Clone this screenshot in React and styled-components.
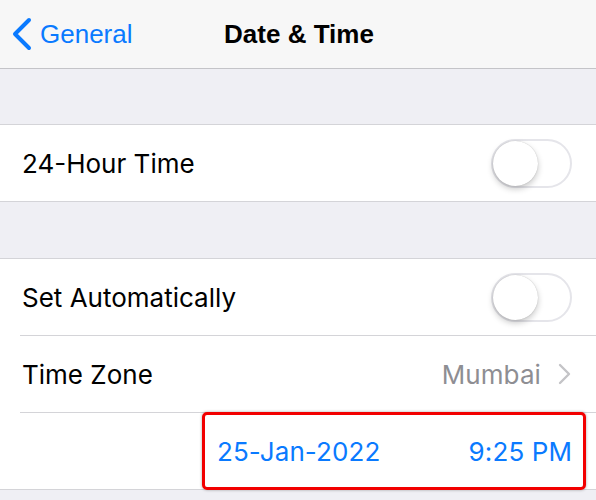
import React from "react";
import styled, { createGlobalStyle } from "styled-components";

const GlobalStyle = createGlobalStyle`
  body {
    margin: 0;
    background: #efeff4;
    font-family: "Liberation Sans", Arial, sans-serif;
    -webkit-font-smoothing: antialiased;
  }
`;

const Page = styled.div`
  width: 596px;
  height: 500px;
  overflow: hidden;
  background: #efeff4;
`;

const NavBar = styled.div`
  position: relative;
  height: 68px;
  background: #f7f7f7;
  border-bottom: 1px solid #c4c4c8;
  display: flex;
  align-items: center;
  justify-content: center;
`;

const BackButton = styled.div`
  position: absolute;
  left: 12px;
  top: 0;
  bottom: 0;
  display: flex;
  align-items: center;
  gap: 8px;
  color: #0a7aff;
  font-size: 26px;
`;

const Title = styled.div`
  font-size: 26px;
  font-weight: bold;
  color: #000;
  margin-left: 2px;
`;

const Gap = styled.div`
  height: ${(p) => p.$h}px;
`;

const Group = styled.div`
  background: #fff;
  border-top: 1px solid #d4d4d8;
  border-bottom: 1px solid #d4d4d8;
`;

const Row = styled.div`
  height: 76px;
  display: flex;
  align-items: center;
  padding-right: 24px;
  border-top: ${(p) => (p.$sep ? "1px solid #d4d4d8" : "none")};
  margin-left: ${(p) => (p.$sep ? "20px" : "0")};
  padding-left: ${(p) => (p.$sep ? "2px" : "22px")};
`;

const Text = styled.span`
  font-family: Inter, "Liberation Sans", sans-serif;
  font-size: 26px;
  letter-spacing: 0.1px;
`;

const Label = styled(Text)`
  flex: 1;
  color: #000;
  letter-spacing: 0;
`;

const Detail = styled(Text)`
  color: #8e8e93;
  margin-right: 17px;
`;

const Switch = styled.div`
  box-sizing: border-box;
  width: 81px;
  height: 49px;
  border-radius: 25px;
  border: 2px solid #e5e5ea;
  background: #fff;
  position: relative;
`;

const Knob = styled.div`
  position: absolute;
  left: 0;
  top: 0;
  width: 45px;
  height: 45px;
  border-radius: 50%;
  background: #fff;
  box-shadow: 0 3px 6px rgba(0, 0, 0, 0.22), 0 0 1px rgba(0, 0, 0, 0.25);
`;

const DateRow = styled.div`
  height: 76px;
  margin-left: 20px;
  border-top: 1px solid #d4d4d8;
  display: flex;
  justify-content: flex-end;
  padding-right: 10px;
`;

const Highlight = styled.div`
  box-sizing: border-box;
  width: 384px;
  height: 78px;
  margin-top: -1px;
  border: 3px solid #f20000;
  border-radius: 5px;
  box-shadow: 0 0 3px rgba(0, 0, 0, 0.35);
  display: flex;
  align-items: center;
  justify-content: space-between;
  padding: 0 11px 0 12px;
  color: #0a7aff;
`;

const Chevron = () => (
  <svg width="14" height="22" viewBox="0 0 14 22">
    <path d="M2 2l9 9-9 9" fill="none" stroke="#c4c4c7" strokeWidth="2.4" strokeLinecap="round" strokeLinejoin="round" />
  </svg>
);

const BackChevron = () => (
  <svg width="20" height="34" viewBox="0 0 20 34">
    <path d="M17 3L3 17l14 14" fill="none" stroke="#0a7aff" strokeWidth="4" strokeLinecap="round" strokeLinejoin="round" />
  </svg>
);

const Toggle = () => (
  <Switch>
    <Knob />
  </Switch>
);

export default function App() {
  return (
    <Page>
      <GlobalStyle />
      <NavBar>
        <BackButton>
          <BackChevron />
          General
        </BackButton>
        <Title>Date &amp; Time</Title>
      </NavBar>
      <Gap $h={55} />
      <Group>
        <Row>
          <Label>24-Hour Time</Label>
          <Toggle />
        </Row>
      </Group>
      <Gap $h={56} />
      <Group>
        <Row>
          <Label>Set Automatically</Label>
          <Toggle />
        </Row>
        <Row $sep>
          <Label>Time Zone</Label>
          <Detail>Mumbai</Detail>
          <Chevron />
        </Row>
        <DateRow>
          <Highlight>
            <Text>25-Jan-2022</Text>
            <Text>9:25 PM</Text>
          </Highlight>
        </DateRow>
      </Group>
    </Page>
  );
}
